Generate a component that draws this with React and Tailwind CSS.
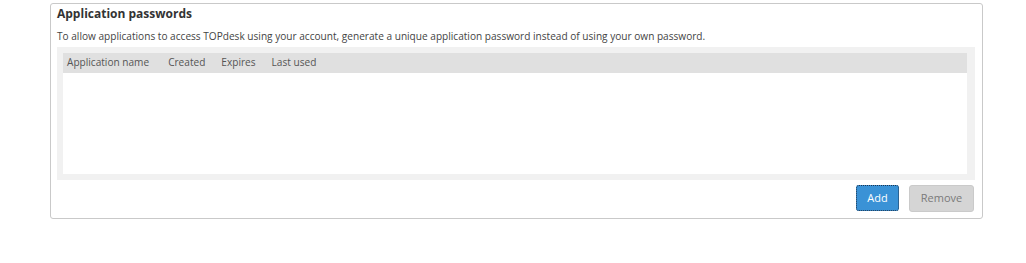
export default function App() {
  const columns = [
    { label: "Application name", cls: "mr-[19px]" },
    { label: "Created", cls: "mr-[16px]" },
    { label: "Expires", cls: "mr-[16px]" },
    { label: "Last used", cls: "" },
  ];

  return (
    <div
      className="w-[1026px] h-[263px] bg-white pt-[3px] pl-[50px]"
      style={{ fontFamily: '"Open Sans", sans-serif' }}
    >
      <div className="w-[933px] h-[216px] border border-[#c9c9c9] rounded-[3px] px-[6px] flex flex-col">
        <h2 className="text-[12px] font-bold text-[#333] leading-[16px] mt-[2px]">
          Application passwords
        </h2>
        <p className="text-[10.1px] text-[#444] leading-[14px] mt-[7px]">
          To allow applications to access TOPdesk using your account, generate a unique application password instead of using your own password.
        </p>
        <div className="mt-[4px] w-[918px] h-[133px] bg-[#f1f1f1] pt-[6px] pb-[6px] pl-[6px] pr-[8px]">
          <div className="h-full bg-white">
            <div className="h-[20px] bg-[#e0e0e0] flex items-center pl-[4px] text-[10.1px] text-[#555]">
              {columns.map((col) => (
                <span key={col.label} className={col.cls}>
                  {col.label}
                </span>
              ))}
            </div>
          </div>
        </div>
        <div className="flex justify-end gap-[10px] mt-[5px] pr-[2px]">
          <button className="w-[43px] h-[26px] bg-[#3a92d6] text-white text-[11px] rounded-[3px] outline-1 outline-dotted outline-[#1d3550] -outline-offset-1">
            Add
          </button>
          <button className="w-[65px] h-[27px] bg-[#d5d5d5] text-[#7a7a7a] text-[11px] rounded-[3px] border border-[#cacaca]">
            Remove
          </button>
        </div>
      </div>
    </div>
  );
}
